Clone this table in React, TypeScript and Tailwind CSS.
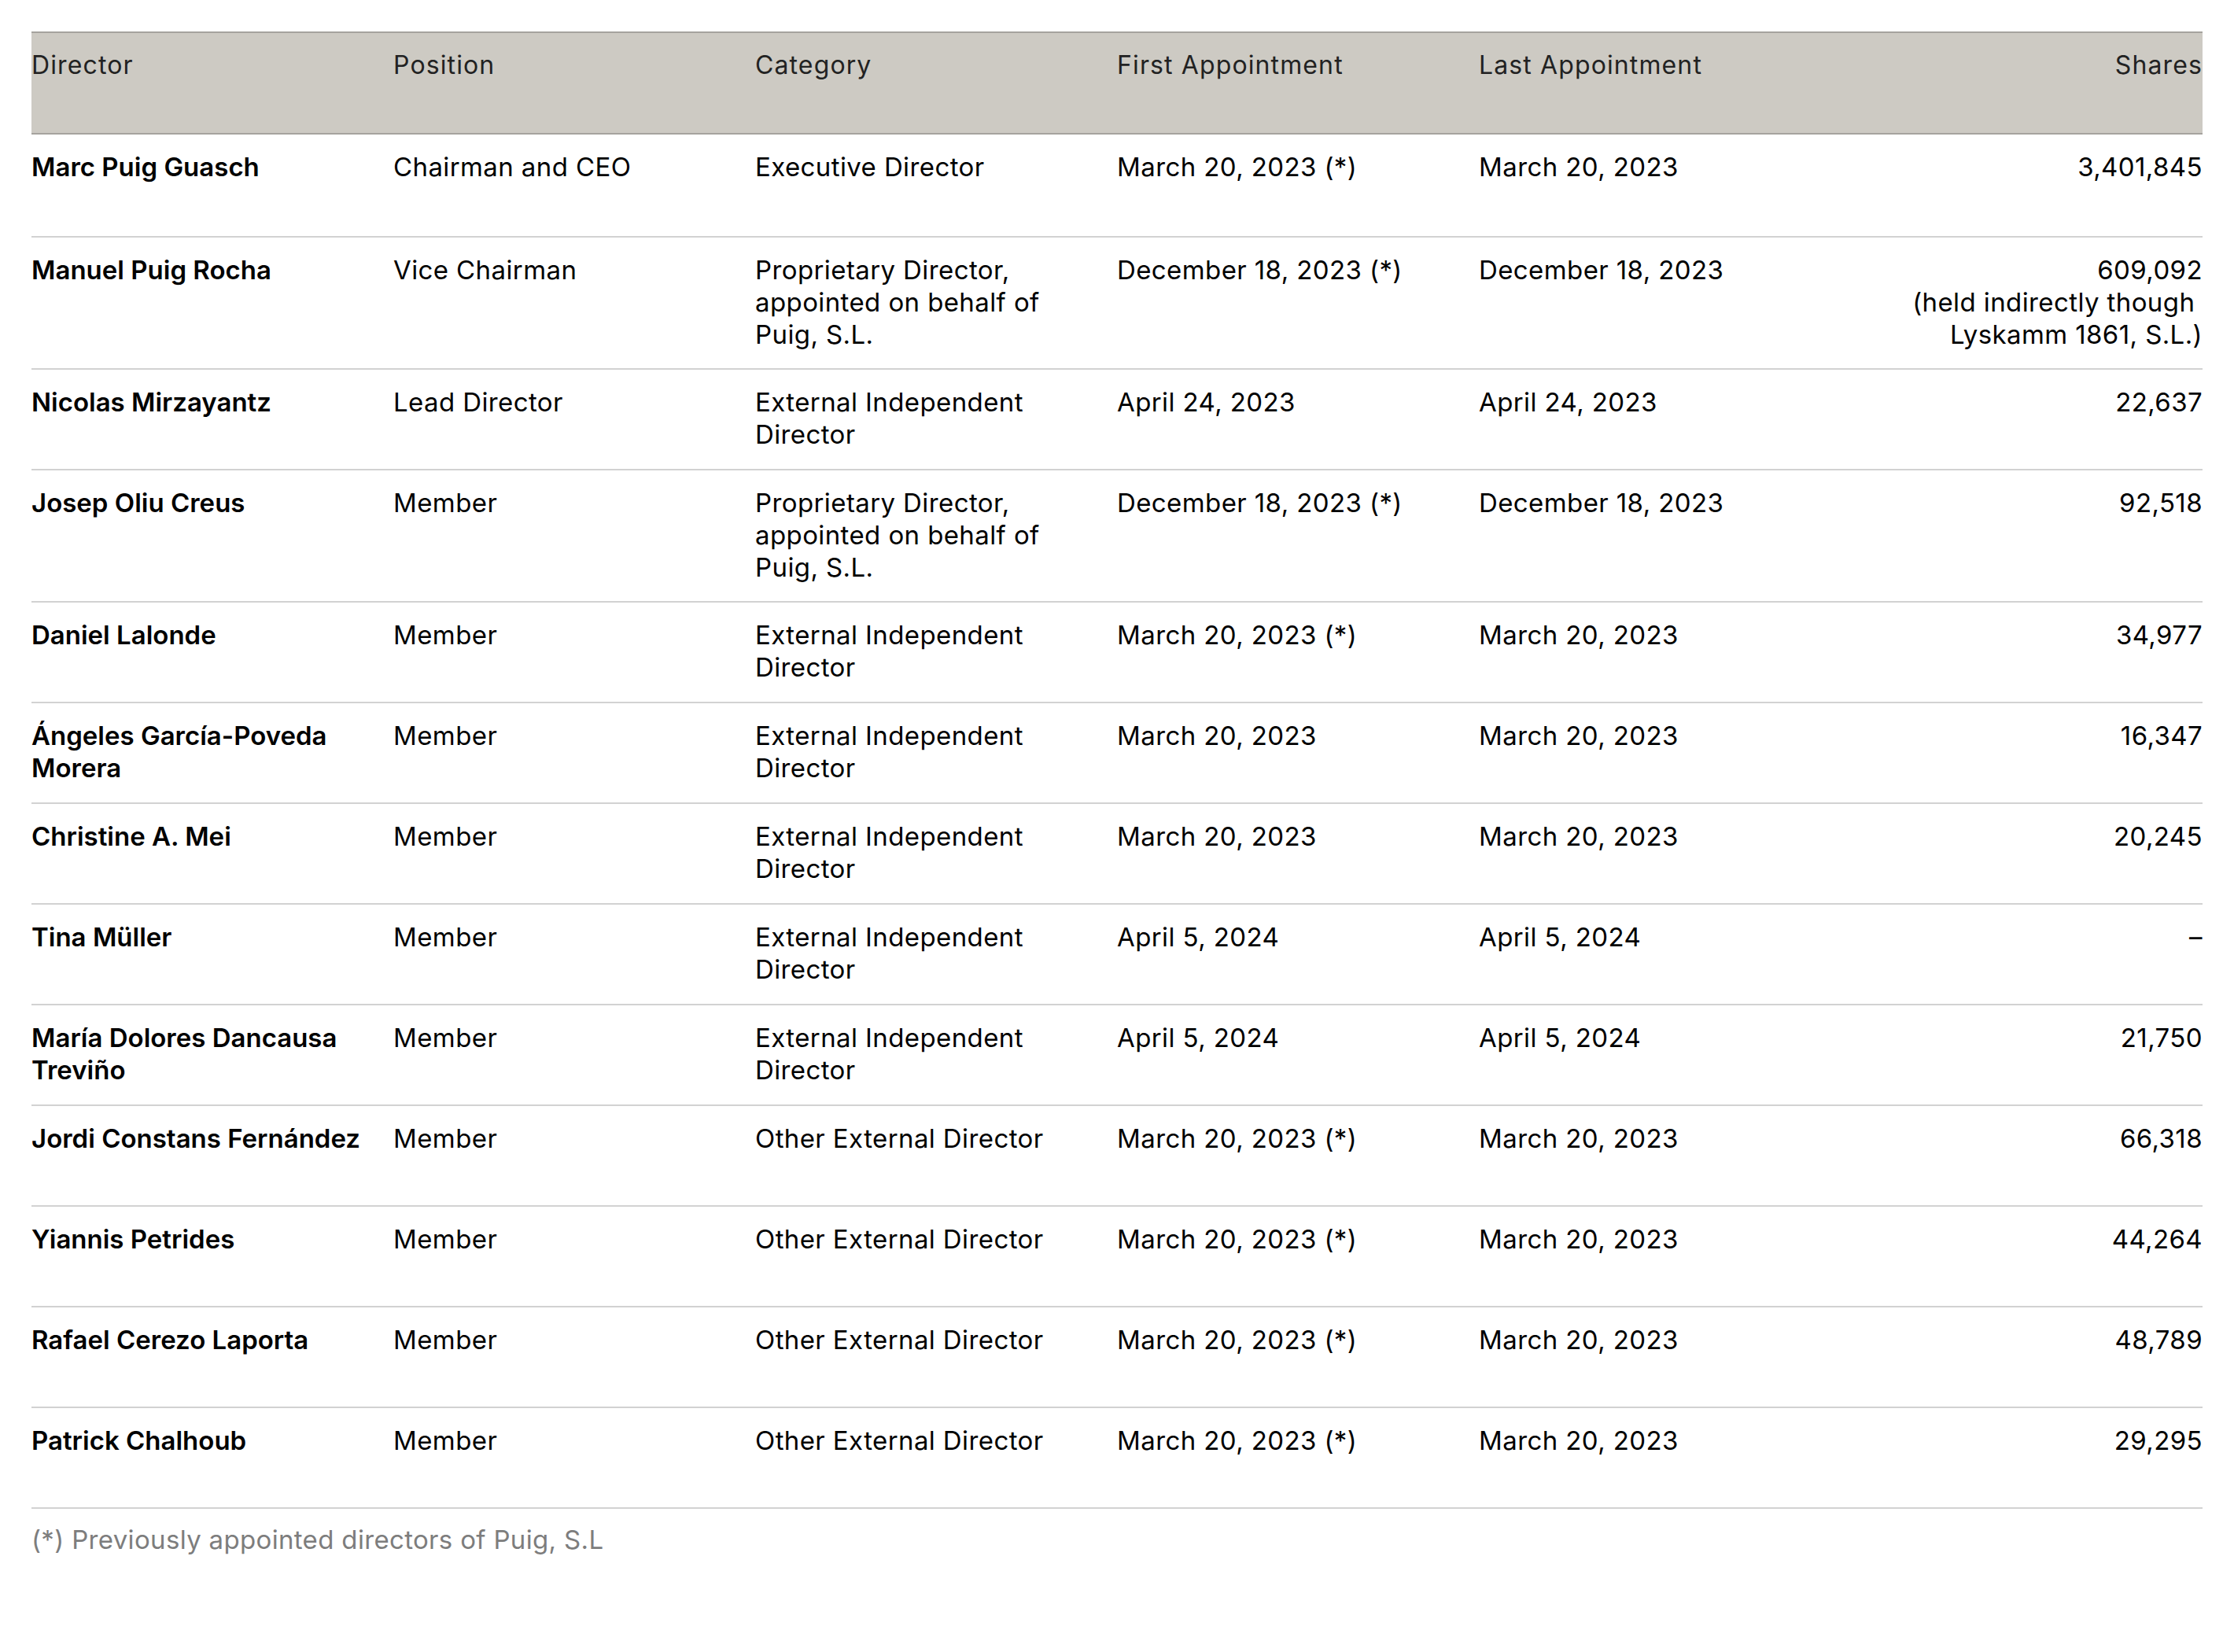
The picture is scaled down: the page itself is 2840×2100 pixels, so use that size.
import React from "react";

type Row = {
  name: string[];
  position: string;
  category: string[];
  first: string;
  last: string;
  shares: string[];
};

const EID = ["External Independent", "Director"];
const PROP = ["Proprietary Director,", "appointed on behalf of", "Puig, S.L."];
const OED = ["Other External Director"];

const rows: Row[] = [
  { name: ["Marc Puig Guasch"], position: "Chairman and CEO", category: ["Executive Director"], first: "March 20, 2023 (*)", last: "March 20, 2023", shares: ["3,401,845"] },
  { name: ["Manuel Puig Rocha"], position: "Vice Chairman", category: PROP, first: "December 18, 2023 (*)", last: "December 18, 2023", shares: ["609,092", "(held indirectly though\u00a0", "Lyskamm 1861, S.L.)"] },
  { name: ["Nicolas Mirzayantz"], position: "Lead Director", category: EID, first: "April 24, 2023", last: "April 24, 2023", shares: ["22,637"] },
  { name: ["Josep Oliu Creus"], position: "Member", category: PROP, first: "December 18, 2023 (*)", last: "December 18, 2023", shares: ["92,518"] },
  { name: ["Daniel Lalonde"], position: "Member", category: EID, first: "March 20, 2023 (*)", last: "March 20, 2023", shares: ["34,977"] },
  { name: ["Ángeles García-Poveda", "Morera"], position: "Member", category: EID, first: "March 20, 2023", last: "March 20, 2023", shares: ["16,347"] },
  { name: ["Christine A. Mei"], position: "Member", category: EID, first: "March 20, 2023", last: "March 20, 2023", shares: ["20,245"] },
  { name: ["Tina Müller"], position: "Member", category: EID, first: "April 5, 2024", last: "April 5, 2024", shares: ["–"] },
  { name: ["María Dolores Dancausa", "Treviño"], position: "Member", category: EID, first: "April 5, 2024", last: "April 5, 2024", shares: ["21,750"] },
  { name: ["Jordi Constans Fernández"], position: "Member", category: OED, first: "March 20, 2023 (*)", last: "March 20, 2023", shares: ["66,318"] },
  { name: ["Yiannis Petrides"], position: "Member", category: OED, first: "March 20, 2023 (*)", last: "March 20, 2023", shares: ["44,264"] },
  { name: ["Rafael Cerezo Laporta"], position: "Member", category: OED, first: "March 20, 2023 (*)", last: "March 20, 2023", shares: ["48,789"] },
  { name: ["Patrick Chalhoub"], position: "Member", category: OED, first: "March 20, 2023 (*)", last: "March 20, 2023", shares: ["29,295"] },
];

function Lines({ lines }: { lines: string[] }) {
  return (
    <>
      {lines.map((l, i) => (
        <div key={i} className="whitespace-pre">
          {l}
        </div>
      ))}
    </>
  );
}

export default function App() {
  return (
    <div
      className="min-h-[2100px] w-[2840px] bg-white px-[40px] pt-[40px] text-black"
      style={{ fontFamily: "Inter, 'Liberation Sans', sans-serif" }}
    >
      <div className="w-[2760px]">
        <div className="grid h-[131px] grid-cols-6 border-y-2 border-[#a6a39e] bg-[#cdcac3] pt-[21px] text-[32px] leading-[40px] tracking-[0.035em] text-[#222222] font-normal">
          <div>Director</div>
          <div>Position</div>
          <div>Category</div>
          <div>First Appointment</div>
          <div>Last Appointment</div>
          <div className="text-right">Shares</div>
        </div>
        {rows.map((r, i) => (
          <div
            key={i}
            className={`grid grid-cols-6 border-b-2 border-[#d2d2d2] pb-[22px] pt-[21px] text-[33px] leading-[41px] tracking-[0.012em] ${
              i === 0 ? "min-h-[131px]" : "min-h-[128px]"
            }`}
          >
            <div className="font-semibold tracking-normal">
              <Lines lines={r.name} />
            </div>
            <div>{r.position}</div>
            <div>
              <Lines lines={r.category} />
            </div>
            <div>{r.first}</div>
            <div>{r.last}</div>
            <div className="text-right">
              <Lines lines={r.shares} />
            </div>
          </div>
        ))}
        <div className="pt-[19px] text-[33px] leading-[40px] tracking-[0.01em] text-[#7d7d7d]">
          (*) Previously appointed directors of Puig, S.L
        </div>
      </div>
    </div>
  );
}
